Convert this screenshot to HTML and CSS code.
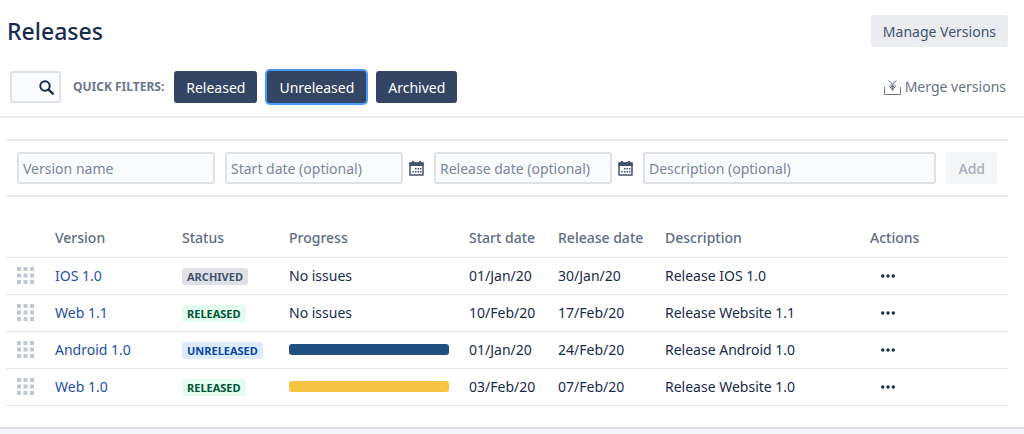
FILE: index.html
```html
<!DOCTYPE html>
<html lang="en">
<head>
<meta charset="utf-8">
<title>Releases</title>
<meta name="viewport" content="width=device-width, initial-scale=1">
<link rel="stylesheet" href="styles.css">
</head>
<body>
<svg class="sprite" aria-hidden="true">
  <symbol id="calendar" viewBox="0 0 15 15">
    <path d="M1 2h13v12H1z" fill="#fff" stroke="#42526e" stroke-width="1.500" stroke-linejoin="round"/>
    <path d="M.5 1.500h14V5H.5zM3 0h2v3H3zM10 0h2v3h-2z" fill="#42526e"/>
    <path d="M6 7h1.500v1.500H6zM8.500 7H10v1.500H8.500zM11 7h1.500v1.500H11zM3.300 10h1.500v1.500H3.300zM6 10h1.500v1.500H6zM8.500 10H10v1.500H8.500zM11 10h1.500v1.500H11z" fill="#42526e"/>
  </symbol>
  <symbol id="grip" viewBox="0 0 17 17">
    <path d="M0 0h4v4H0zM6.500 0h4v4h-4zM13 0h4v4h-4zM0 6.500h4v4H0zM6.500 6.500h4v4h-4zM13 6.500h4v4h-4zM0 13h4v4H0zM6.500 13h4v4h-4zM13 13h4v4h-4z" fill="#c1c7d0"/>
  </symbol>
  <symbol id="more" viewBox="0 0 14 4">
    <circle cx="1.700" cy="2" r="1.700"/><circle cx="7" cy="2" r="1.700"/><circle cx="12.300" cy="2" r="1.700"/>
  </symbol>
</svg>

<main class="page">
  <header class="page-header">
    <h1 class="title">Releases</h1>
    <button class="button" type="button">Manage Versions</button>
  </header>

  <div class="toolbar">
    <label class="search">
      <input class="search-input" type="search" aria-label="Search versions">
      <svg class="search-icon" viewBox="0 0 15 15" aria-hidden="true"><circle cx="6" cy="6" r="4.700" fill="none" stroke="#172b4d" stroke-width="2"/><path d="M9.500 9.500l4.200 4.200" stroke="#172b4d" stroke-width="2.400" stroke-linecap="round"/></svg>
    </label>
    <span class="filter-label">QUICK FILTERS:</span>
    <div class="filters">
      <button class="button filter" type="button">Released</button>
      <button class="button filter is-focused" type="button">Unreleased</button>
      <button class="button filter" type="button">Archived</button>
    </div>
    <a class="merge" href="#merge">
      <svg class="merge-icon" viewBox="0 0 17 15" fill="none" stroke="#707782" aria-hidden="true"><path d="M.5 7v7.500h16V7M8.500 10.500V5.500Q8.200 2 4.500.8M8.500 5.500Q8.800 2 12.500.8M5 5.300l3.500 5 3.500-5M8.500 9L6.700 4.500M8.500 9l1.800-4.500"/></svg>
      Merge versions
    </a>
  </div>

  <form class="create">
    <input class="field name" type="text" placeholder="Version name" aria-label="Version name">
    <div class="date">
      <input class="field" type="text" placeholder="Start date (optional)" aria-label="Start date">
      <button class="icon-button" type="button" aria-label="Pick start date"><svg class="calendar"><use href="#calendar"/></svg></button>
    </div>
    <div class="date">
      <input class="field" type="text" placeholder="Release date (optional)" aria-label="Release date">
      <button class="icon-button" type="button" aria-label="Pick release date"><svg class="calendar"><use href="#calendar"/></svg></button>
    </div>
    <input class="field description" type="text" placeholder="Description (optional)" aria-label="Description">
    <button class="button add" type="submit" disabled>Add</button>
  </form>

  <table class="versions">
    <colgroup>
      <col class="col-grip"><col class="col-version"><col class="col-status"><col class="col-progress"><col class="col-start"><col class="col-release"><col><col class="col-actions">
    </colgroup>
    <thead>
      <tr><td></td><th scope="col">Version</th><th scope="col">Status</th><th scope="col">Progress</th><th scope="col">Start date</th><th scope="col">Release date</th><th scope="col">Description</th><th scope="col">Actions</th></tr>
    </thead>
    <tbody>
      <tr>
        <td><svg class="grip"><use href="#grip"/></svg></td>
        <td><a class="link" href="#ios-1.0">IOS 1.0</a></td>
        <td><span class="badge archived">ARCHIVED</span></td>
        <td>No issues</td><td>01/Jan/20</td><td>30/Jan/20</td><td>Release IOS 1.0</td>
        <td><button class="icon-button actions" type="button" aria-label="Actions for IOS 1.0"><svg class="more"><use href="#more"/></svg></button></td>
      </tr>
      <tr>
        <td><svg class="grip"><use href="#grip"/></svg></td>
        <td><a class="link" href="#web-1.1">Web 1.1</a></td>
        <td><span class="badge released">RELEASED</span></td>
        <td>No issues</td><td>10/Feb/20</td><td>17/Feb/20</td><td>Release Website 1.1</td>
        <td><button class="icon-button actions" type="button" aria-label="Actions for Web 1.1"><svg class="more"><use href="#more"/></svg></button></td>
      </tr>
      <tr>
        <td><svg class="grip"><use href="#grip"/></svg></td>
        <td><a class="link" href="#android-1.0">Android 1.0</a></td>
        <td><span class="badge unreleased">UNRELEASED</span></td>
        <td><div class="bar todo"></div></td><td>01/Jan/20</td><td>24/Feb/20</td><td>Release Android 1.0</td>
        <td><button class="icon-button actions" type="button" aria-label="Actions for Android 1.0"><svg class="more"><use href="#more"/></svg></button></td>
      </tr>
      <tr>
        <td><svg class="grip"><use href="#grip"/></svg></td>
        <td><a class="link" href="#web-1.0">Web 1.0</a></td>
        <td><span class="badge released">RELEASED</span></td>
        <td><div class="bar in-progress"></div></td><td>03/Feb/20</td><td>07/Feb/20</td><td>Release Website 1.0</td>
        <td><button class="icon-button actions" type="button" aria-label="Actions for Web 1.0"><svg class="more"><use href="#more"/></svg></button></td>
      </tr>
    </tbody>
  </table>
</main>
<footer class="footer"></footer>
</body>
</html>
```
FILE: styles.css
```css
* { box-sizing: border-box; }
html { height: 100%; }
body {
  display: flex;
  flex-direction: column;
  min-height: 100%;
  margin: 0;
  background: #fff;
  color: #172b4d;
  font: 14px/20px "Noto Sans", "Open Sans", sans-serif;
}
button, input { font: inherit; color: inherit; }
svg { display: block; }
.sprite { position: absolute; width: 0; height: 0; }

.page { padding-bottom: 21px; }
.page-header {
  display: flex;
  align-items: center;
  justify-content: space-between;
  padding: 15px 16px 0 7px;
}
.title { margin: 0; font-size: 23px; line-height: 32px; font-weight: 500; }
.button {
  height: 32px;
  padding: 1px 12px 0;
  border: 0;
  border-radius: 3px;
  background: #ebecf0;
  color: #42526e;
  white-space: nowrap;
}

.toolbar {
  display: flex;
  align-items: center;
  padding: 24px 18px 13px 10px;
  border-bottom: 2px solid #ebebed;
}
.search {
  display: flex;
  align-items: center;
  width: 51px;
  height: 32px;
  padding-right: 5px;
  border: 2px solid #dfe1e6;
  border-radius: 3px;
  background: #fafbfc;
}
.search-input { flex: 1; min-width: 0; padding: 0; border: 0; background: none; outline: 0; }
.search-icon { width: 15px; height: 15px; }
.filter-label { margin: 0 10px 0 12px; color: #6b778c; font-size: 12px; font-weight: 700; }
.filters { display: flex; gap: 10px; }
.filter { background: #344563; color: #fff; }
.is-focused { box-shadow: 0 0 0 2px #4c9aff; }
.merge {
  display: flex;
  align-items: center;
  gap: 4px;
  margin-left: auto;
  color: #6b7280;
  text-decoration: none;
}
.merge-icon { width: 17px; height: 15px; }

.create {
  display: flex;
  align-items: center;
  gap: 10px;
  margin: 21px 16px 0 6px;
  padding: 11px;
  border-top: 2px solid #ebebed;
  border-bottom: 2px solid #ebebed;
}
.field {
  min-width: 0;
  width: 178px;
  height: 32px;
  padding: 0 4px;
  border: 2px solid #dfe1e6;
  border-radius: 3px;
  background: #fafbfc;
}
.field::placeholder { color: #7a869a; opacity: 1; }
.name { width: 198px; }
.date { display: flex; align-items: center; gap: 6px; }
.icon-button { padding: 0; border: 0; background: none; }
.calendar { width: 15px; height: 15px; }
.description { flex: 1; }
.add { background: #f4f5f7; color: #a5adba; font-weight: 500; }

.versions {
  width: calc(100% - 22px);
  margin: 23px 16px 0 6px;
  border-collapse: collapse;
  table-layout: fixed;
}
.versions th, .versions td {
  height: 37px;
  padding: 0 10px;
  border-bottom: 1px solid #e4e6ea;
  text-align: left;
  white-space: nowrap;
}
.versions th { color: #5e6c84; font-weight: 500; }
.col-grip { width: 39px; }
.col-version { width: 127px; }
.col-status { width: 107px; }
.col-progress { width: 180px; }
.col-start { width: 89px; }
.col-release { width: 107px; }
.col-actions { width: 148px; }
.grip { width: 17px; height: 17px; margin-left: 1px; }
.link { color: #1f50a8; text-decoration: none; }
.badge {
  display: inline-block;
  padding: 0 5px;
  border-radius: 3px;
  font-size: 11px;
  line-height: 17px;
  font-weight: 700;
  vertical-align: middle;
}
.archived { background: #dfe1e6; color: #42526e; }
.released { background: #e3fcef; color: #005537; }
.unreleased { background: #deebff; color: #0747a6; }
.bar { height: 11px; border-radius: 3px; }
.todo { background: #205081; }
.in-progress { background: #f6c342; }
.actions { display: block; margin-left: 11px; }
.more { width: 14px; height: 4px; fill: #172b4d; }

.footer { flex: 1; border-top: 2px solid #dfe1e6; background: #f4f5f7; }
```
